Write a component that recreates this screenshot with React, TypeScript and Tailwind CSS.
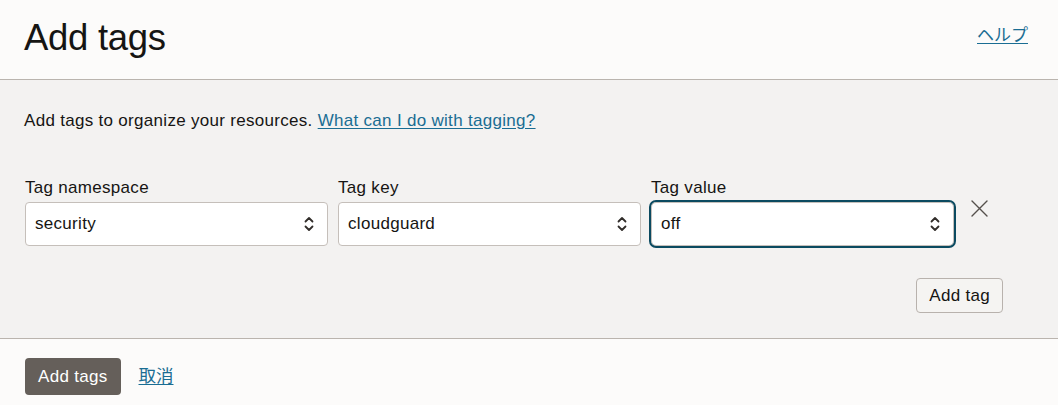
import React from 'react'

function Chevrons() {
  return (
    <svg width="12" height="20" viewBox="0 0 12 20" fill="none" stroke="#312d2a" strokeWidth="1.8" strokeLinecap="round" strokeLinejoin="round">
      <path d="M2.5 7.5 L6 4 L9.5 7.5" />
      <path d="M2.5 12.5 L6 16 L9.5 12.5" />
    </svg>
  )
}

function SelectField({ label, value, focused }: { label: string; value: string; focused?: boolean }) {
  return (
    <div className="flex w-[303px] flex-col">
      <div className="mb-[5px] text-[17px] leading-[19px] tracking-[0.3px] text-[#161513]">{label}</div>
      <div
        className={
          focused
            ? 'flex h-[44px] items-center justify-between rounded-[5px] border border-[#c5bfba] bg-white pl-[9px] pr-[12px] outline outline-2 outline-offset-0 outline-[#0b4a60]'
            : 'flex h-[44px] items-center justify-between rounded-[4px] border border-[#c5bfba] bg-white pl-[9px] pr-[12px]'
        }
      >
        <span className="text-[17px] tracking-[0.3px] text-[#161513]">{value}</span>
        <Chevrons />
      </div>
    </div>
  )
}

export default function App() {
  return (
    <div className="flex h-[405px] w-[1058px] flex-col bg-[#fcfbfa] font-['Liberation_Sans','Noto_Sans_CJK_JP',sans-serif] text-[#161513]">
      <header className="flex h-[80px] items-center justify-between border-b border-[#bab4ae] px-[24px]">
        <h1 className="mb-[2px] text-[36.5px] leading-none tracking-[-0.3px] text-[#161513]">Add tags</h1>
        <a href="#" className="mr-[6px] mb-[7px] text-[17px] text-[#1a6d93] underline underline-offset-2">ヘルプ</a>
      </header>
      <main className="flex h-[259px] flex-col border-b border-[#bab4ae] bg-[#f3f2f1] px-[24px]">
        <p className="mt-[31px] text-[17px] leading-[19px] tracking-[0.3px]">
          Add tags to organize your resources.{' '}
          <a href="#" className="text-[#1a6d93] underline underline-offset-2">What can I do with tagging?</a>
        </p>
        <div className="mt-[48px] flex items-start gap-[10px] pl-px">
          <SelectField label="Tag namespace" value="security" />
          <SelectField label="Tag key" value="cloudguard" />
          <SelectField label="Tag value" value="off" focused />
          <button className="ml-[7px] mt-[22px] text-[#55504c]">
            <svg width="17" height="17" viewBox="0 0 17 17" fill="none" stroke="currentColor" strokeWidth="1.4" strokeLinecap="round">
              <path d="M1 1 L16 16 M16 1 L1 16" />
            </svg>
          </button>
        </div>
        <div className="mt-[32px] flex justify-end pr-[31px]">
          <button className="h-[35px] rounded-[4px] border border-[#b8b2ad] bg-[#f5f4f2] px-[12px] text-[17px] tracking-[0.3px] text-[#161513]">Add tag</button>
        </div>
      </main>
      <footer className="flex items-center gap-[18px] px-[25px] pt-[19px]">
        <button className="h-[37px] rounded-[4px] bg-[#655f5a] px-[13px] text-[17px] tracking-[0.3px] text-white">Add tags</button>
        <a href="#" className="text-[17.5px] text-[#1a6d93] underline underline-offset-2">取消</a>
      </footer>
    </div>
  )
}
